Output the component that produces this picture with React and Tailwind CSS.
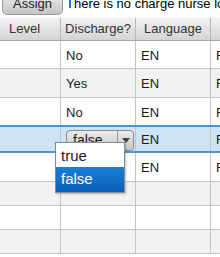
import React from "react";

const ROWS = [
  { h: "h-[28px]", bg: "bg-white", discharge: "No", lang: "EN", next: "F" },
  { h: "h-[29px]", bg: "bg-[#f2f2f2]", discharge: "Yes", lang: "EN", next: "F" },
  { h: "h-[28px]", bg: "bg-white", discharge: "No", lang: "EN", next: "F" },
  { h: "h-[28px]", bg: "bg-[#cde4f7]", lang: "EN", next: "F", editing: true },
  { h: "h-[29px]", bg: "bg-white", discharge: "", lang: "EN", next: "F" },
  { h: "h-[24px]", bg: "bg-[#f2f2f2]" },
  { h: "h-[24px]", bg: "bg-white" },
  { h: "h-[24px]", bg: "bg-[#f2f2f2]" },
];

const Cell = ({ w, children, className = "" }) => (
  <div className={`${w} h-full shrink-0 border-r border-[#c4c4c4] flex items-center pl-[5px] pt-[2px] overflow-hidden whitespace-nowrap ${className}`}>
    {children}
  </div>
);

const HeadCell = ({ w, children, className = "" }) => (
  <div className={`${w} h-full shrink-0 border-r border-[#b8b8b8] flex items-center whitespace-nowrap overflow-hidden ${className}`}>
    {children}
  </div>
);

function FalseSelect() {
  return (
    <div className="w-[68px] h-[21px] rounded-[4px] border border-[#8c8c8c] bg-gradient-to-b from-[#ececec] to-[#c6c6c6] flex items-center">
      <span className="flex-1 pl-[6px] text-[14px] leading-none">false</span>
      <div className="w-[16px] h-full border-l border-[#9a9a9a] flex items-center justify-center">
        <svg width="8" height="5" viewBox="0 0 8 5">
          <path d="M0 0h8L4 5z" fill="#444" />
        </svg>
      </div>
    </div>
  );
}

export default function App() {
  return (
    <div className="w-[220px] h-[257px] overflow-hidden bg-white relative font-['Liberation_Sans',Arial,sans-serif] text-[13px] text-[#1a1a1a]">
      {/* toolbar, scrolled partly off the top */}
      <div className="h-[17px] overflow-hidden flex items-end">
        <div className="flex items-end gap-[3px] mb-[2px] pl-[2px]">
          <button className="w-[61px] h-[22px] shrink-0 rounded-[5px] border border-[#9a9a9a] bg-gradient-to-b from-[#eeeeee] to-[#c4c4c4] text-[13px] text-[#222] leading-none flex items-end justify-center pb-[4px]">
            Assign
          </button>
          <span className="whitespace-nowrap leading-none pb-[5px] text-[13px] text-black">
            There is no charge nurse logged in
          </span>
        </div>
      </div>

      {/* header */}
      <div className="h-[24px] flex border-b border-[#a8a8a8] bg-gradient-to-b from-[#f5f5f5] to-[#d3d3d3] text-[#333] pt-[1px]">
        <HeadCell w="w-[61px]" className="pl-[9px]">Level</HeadCell>
        <HeadCell w="w-[75px]" className="justify-center">Discharge?</HeadCell>
        <HeadCell w="w-[75px]" className="justify-center">Language</HeadCell>
        <div className="flex-1" />
      </div>

      {/* rows */}
      {ROWS.map((r, i) => (
        <div
          key={i}
          className={`${r.h} ${r.bg} flex ${
            r.editing
              ? "border-y-2 border-[#4b93da] -mt-[1px]"
              : "border-b border-[#c4c4c4]"
          }`}
        >
          <Cell w="w-[61px]" />
          <Cell w="w-[75px]" className={r.editing ? "pl-[4px] pt-0" : ""}>
            {r.editing ? <FalseSelect /> : r.discharge}
          </Cell>
          <Cell w="w-[75px]">{r.lang}</Cell>
          <Cell w="flex-1" className="border-r-0 pl-[4px]">{r.next}</Cell>
        </div>
      ))}

      {/* open dropdown list */}
      <div className="absolute left-[55px] top-[142px] w-[70px] h-[51px] bg-white border border-[#8a8a8a] shadow-[1px_1px_2px_rgba(0,0,0,0.25)] flex flex-col">
        <div className="h-[24px] flex items-center pl-[5px] pt-[2px] text-[15px] text-[#1a1a1a]">true</div>
        <div className="flex-1 flex items-center pl-[5px] text-[15px] text-white bg-gradient-to-b from-[#1a7fdc] to-[#0a5fb5]">
          false
        </div>
      </div>
    </div>
  );
}
